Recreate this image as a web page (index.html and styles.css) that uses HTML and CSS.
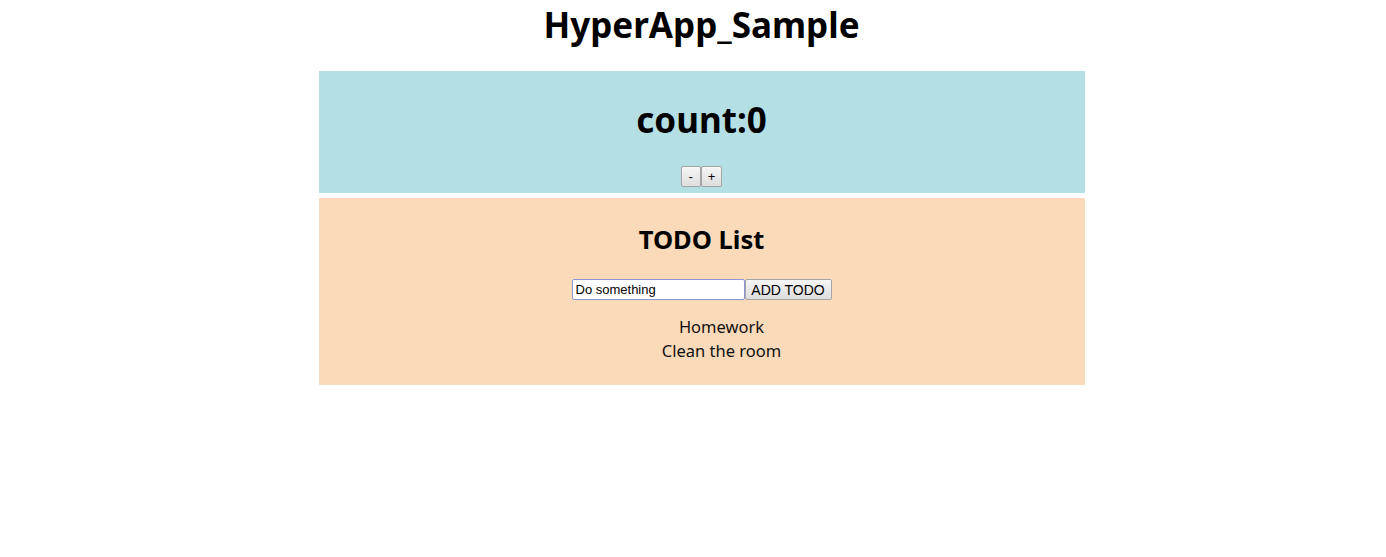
FILE: index.html
```html
<!DOCTYPE html>
<html lang="en">
<head>
  <meta charset="UTF-8" />
  <title>HyperApp_Sample</title>
  <link rel="stylesheet" href="styles.css">
</head>
<body>
  <h1 class="title">HyperApp_Sample</h1>

  <!-- Counter -->
  <section class="counter">
    <h1>count:0</h1>
    <div class="buttons">
      <button>-</button><button>+</button>
    </div>
  </section>

  <!-- Todo -->
  <section class="todo">
    <h2>TODO List</h2>
    <div class="todo-form">
      <input type="text" value="Do something" /><button>ADD TODO</button>
    </div>
    <ul class="todo-list">
      <li>Homework</li>
      <li>Clean the room</li>
    </ul>
  </section>
</body>
</html>
```

FILE: styles.css
```css
* { box-sizing: border-box; }
body { margin: 0 0 8px 17px; font-family: "Noto Sans", sans-serif; color: #000; text-align: center; }

.title { font-size: 35px; margin: 0; padding: 4px 0 25px; line-height: 42px; }

section { width: 766px; margin: 0 auto; }

/* Counter */
.counter { background: #b3dfe5; padding: 27px 0 6px; margin-bottom: 5px; }
.counter h1 { font-size: 35px; margin: 0 0 24px; line-height: 44px; }
.buttons { display: flex; justify-content: center; }
.buttons button { font: 13px "Liberation Sans", Arial, sans-serif; height: 21px; min-width: 20px; padding: 0 6px; border: 1px solid #a5a5a5; border-radius: 2px; background: linear-gradient(#f6f6f6, #dedede); color: #000; }

/* Todo */
.todo { background: #fbdaba; padding: 24px 0 22px; }
.todo h2 { font-size: 25.5px; margin: 0 0 23px; line-height: 34px; }
.todo-form { display: flex; justify-content: center; }
.todo-form input { width: 173px; height: 21px; font: 13px "Liberation Sans", Arial, sans-serif; padding: 1px 3px; border: 1px solid #8d97d3; border-radius: 2px; background: #fff; }
.todo-form button { width: 87px; height: 21px; font: 14px "Liberation Sans", Arial, sans-serif; padding: 0; border: 1px solid #a5a5a5; border-radius: 2px; background: linear-gradient(#f6f6f6, #dedede); color: #000; }
.todo-list { list-style: none; margin: 15px 0 0; padding-left: 40px; font-size: 16.5px; line-height: 24px; color: #111; }
```
